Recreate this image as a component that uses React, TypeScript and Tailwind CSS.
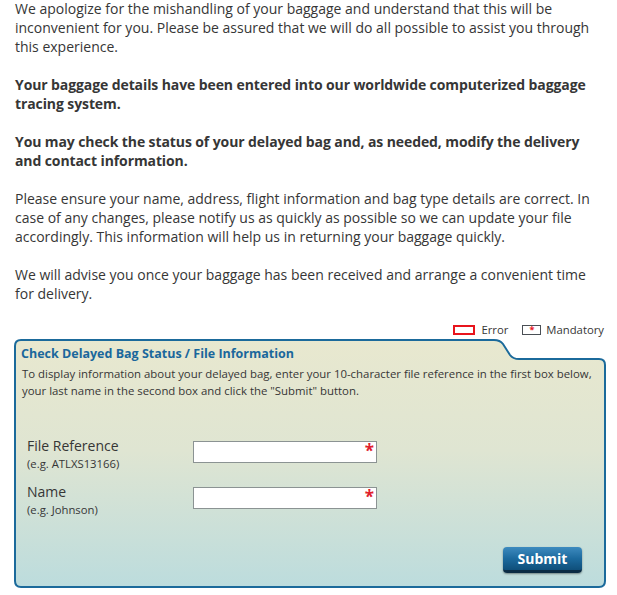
import React from "react";

export default function App() {
  return (
    <div className="w-[617px] h-[595px] overflow-hidden bg-white text-[#363636] font-['Open_Sans',sans-serif]">
      <div className="pl-[15px] -mt-[1px] text-[14px] leading-[19px] whitespace-nowrap">
        <p className="mb-[19px]">
          We apologize for the mishandling of your baggage and understand that this will be
          <br />
          inconvenient for you. Please be assured that we will do all possible to assist you through
          <br />
          this experience.
        </p>
        <p className="mb-[19px] font-bold tracking-[-0.1px]">
          Your baggage details have been entered into our worldwide computerized baggage
          <br />
          tracing system.
        </p>
        <p className="mb-[19px] font-bold tracking-[-0.1px]">
          You may check the status of your delayed bag and, as needed, modify the delivery
          <br />
          and contact information.
        </p>
        <p className="mb-[19px]">
          Please ensure your name, address, flight information and bag type details are correct. In
          <br />
          case of any changes, please notify us as quickly as possible so we can update your file
          <br />
          accordingly. This information will help us in returning your baggage quickly.
        </p>
        <p>
          We will advise you once your baggage has been received and arrange a convenient time
          <br />
          for delivery.
        </p>
      </div>

      <div className="mt-[19px] flex justify-end items-center pr-[13px] h-[16px] text-[11.3px] leading-[16px]">
        <span className="w-[22px] h-[10px] border-2 border-[#e8141c]" />
        <span className="ml-[6px]">Error</span>
        <span className="ml-[14px] w-[19px] h-[10px] border border-[#4a4f55] flex items-center justify-center">
          <span className="text-[#e8141c] text-[9px] leading-[8px] font-bold">*</span>
        </span>
        <span className="ml-[5px]">Mandatory</span>
      </div>

      <div className="relative ml-[14px] mt-[1px] w-[592px] h-[249px]">
        <svg className="absolute inset-0" width="592" height="249" viewBox="0 0 592 249">
          <defs>
            <linearGradient id="pg" x1="0" y1="0" x2="0" y2="1">
              <stop offset="0" stopColor="#e8e8cf" />
              <stop offset="0.45" stopColor="#dfe5d2" />
              <stop offset="1" stopColor="#bcdcdd" />
            </linearGradient>
          </defs>
          <path
            d="M1,7 Q1,1 7,1 H480 Q486,1 489,5 L496,16 Q499,20 505,20 H585 Q591,20 591,26 V242 Q591,248 585,248 H7 Q1,248 1,242 Z"
            fill="url(#pg)"
            stroke="#1b6a9b"
            strokeWidth="2"
          />
        </svg>
        <div className="relative pl-[7px] pt-[5px]">
          <h2 className="text-[12.5px] leading-[20px] font-bold text-[#1a679c]">
            Check Delayed Bag Status / File Information
          </h2>
          <p className="mt-[1px] pl-[1px] text-[11.4px] leading-[17px] text-[#363636] whitespace-nowrap">
            To display information about your delayed bag, enter your 10-character file reference in the first box below,
            <br />
            your last name in the second box and click the "Submit" button.
          </p>

          <div className="mt-[38px] flex flex-col gap-[10px]">
            <div className="flex items-start">
              <div className="w-[172px] pl-[6px]">
                <div className="text-[14px] leading-[18px]">File Reference</div>
                <div className="text-[11.3px] leading-[18px]">(e.g. ATLXS13166)</div>
              </div>
              <div className="mt-[4px] w-[184px] h-[22px] bg-white border border-[#8b9393] relative">
                <span className="absolute right-[2px] top-[0px] text-[#e0202c] text-[17px] leading-[17px] font-bold">*</span>
              </div>
            </div>
            <div className="flex items-start">
              <div className="w-[172px] pl-[6px]">
                <div className="text-[14px] leading-[18px]">Name</div>
                <div className="text-[11.3px] leading-[18px]">(e.g. Johnson)</div>
              </div>
              <div className="mt-[4px] w-[184px] h-[22px] bg-white border border-[#8b9393] relative">
                <span className="absolute right-[2px] top-[0px] text-[#e0202c] text-[17px] leading-[17px] font-bold">*</span>
              </div>
            </div>
          </div>

          <div className="mt-[28px] flex justify-end pr-[24px]">
            <button className="w-[79px] h-[26px] rounded-[4px] bg-gradient-to-b from-[#3d8bbf] via-[#1c6a9e] to-[#0f4f7a] border-b-[3px] border-[#0b2c44] text-white font-bold text-[14px] leading-[20px] shadow-[0_1px_2px_rgba(0,0,0,0.4)]">
              Submit
            </button>
          </div>
        </div>
      </div>
    </div>
  );
}
